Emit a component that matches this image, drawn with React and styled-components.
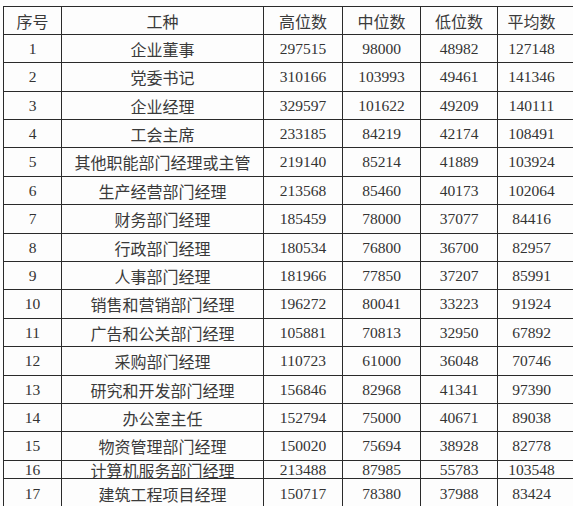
import React from "react";
import styled, { createGlobalStyle } from "styled-components";

const Global = createGlobalStyle`
  html, body { margin: 0; padding: 0; background: #ffffff; overflow: hidden; }
  body { font-family: "Liberation Serif", "Noto Sans CJK SC", serif; }
`;

const Page = styled.div`
  width: 573px;
  height: 506px;
  overflow: hidden;
  padding: 6px 0 0 3px;
  box-sizing: border-box;
  background: #fdfdfd;
`;

const Table = styled.table`
  border-collapse: collapse;
  table-layout: fixed;
  width: 582px;
  color: #2b2b2b;
  font-size: 16px;
`;

const Row = styled.tr`
  height: ${(p) => p.$h}px;
`;

const HeadCell = styled.th`
  border: 1px solid #2a2a2a;
  font-weight: normal;
  text-align: center;
  padding: 0 ${(p) => (p.$last ? "20px" : "0")} 0 0;
  font-family: "Noto Sans CJK SC", sans-serif;
  font-size: 16px;
  color: #3a3a3a;
`;

const Cell = styled.td`
  border: 1px solid #2a2a2a;
  text-align: center;
  padding: 0 ${(p) => (p.$last ? "20px" : "0")} 0 0;
  line-height: 1;
  font-family: ${(p) => (p.$cjk ? `"Noto Sans CJK SC", sans-serif` : `"Liberation Serif", serif`)};
  font-size: ${(p) => (p.$cjk ? "16px" : "15.5px")};
  color: ${(p) => (p.$cjk ? "#3a3a3a" : "#333")};
`;

const cols = [58, 202, 79, 78, 77, 88];
const headers = ["序号", "工种", "高位数", "中位数", "低位数", "平均数"];

const data = [
  ["企业董事", "297515", "98000", "48982", "127148"],
  ["党委书记", "310166", "103993", "49461", "141346"],
  ["企业经理", "329597", "101622", "49209", "140111"],
  ["工会主席", "233185", "84219", "42174", "108491"],
  ["其他职能部门经理或主管", "219140", "85214", "41889", "103924"],
  ["生产经营部门经理", "213568", "85460", "40173", "102064"],
  ["财务部门经理", "185459", "78000", "37077", "84416"],
  ["行政部门经理", "180534", "76800", "36700", "82957"],
  ["人事部门经理", "181966", "77850", "37207", "85991"],
  ["销售和营销部门经理", "196272", "80041", "33223", "91924"],
  ["广告和公关部门经理", "105881", "70813", "32950", "67892"],
  ["采购部门经理", "110723", "61000", "36048", "70746"],
  ["研究和开发部门经理", "156846", "82968", "41341", "97390"],
  ["办公室主任", "152794", "75000", "40671", "89038"],
  ["物资管理部门经理", "150020", "75694", "38928", "82778"],
  ["计算机服务部门经理", "213488", "87985", "55783", "103548"],
  ["建筑工程项目经理", "150717", "78380", "37988", "83424"],
];

const heights = [28, 29, 28, 28, 29, 28, 29, 28, 28, 29, 28, 29, 28, 28, 29, 18, 30];

export default function App() {
  return (
    <>
      <Global />
      <Page>
        <Table>
          <colgroup>
            {cols.map((w, i) => (
              <col key={i} style={{ width: w }} />
            ))}
          </colgroup>
          <thead>
            <Row $h={28}>
              {headers.map((h, i) => (
                <HeadCell key={h} $last={i === headers.length - 1}>
                  {h}
                </HeadCell>
              ))}
            </Row>
          </thead>
          <tbody>
            {data.map((r, i) => (
              <Row key={i} $h={heights[i]}>
                <Cell>{i + 1}</Cell>
                <Cell $cjk>{r[0]}</Cell>
                <Cell>{r[1]}</Cell>
                <Cell>{r[2]}</Cell>
                <Cell>{r[3]}</Cell>
                <Cell $last>{r[4]}</Cell>
              </Row>
            ))}
          </tbody>
        </Table>
      </Page>
    </>
  );
}
